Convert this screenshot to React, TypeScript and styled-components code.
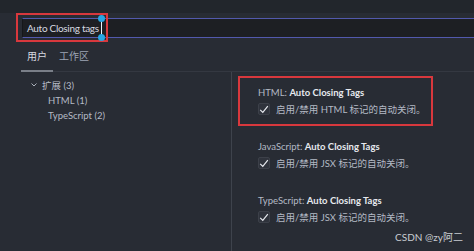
import React from "react";
import styled, { createGlobalStyle } from "styled-components";

const Global = createGlobalStyle`
  html, body { margin: 0; padding: 0; background: #282c34; }
  * { box-sizing: border-box; }
`;

const FONT = `Lato, "Noto Sans CJK SC", sans-serif`;

const Page = styled.div`
  position: relative;
  width: 474px;
  height: 251px;
  overflow: hidden;
  background: #282c34;
  font-family: ${FONT};
  color: #abb2bf;
  display: flex;
  flex-direction: column;
`;

const TopStrip = styled.div`
  height: 13px;
  background: #22262c;
  flex: none;
`;

const SearchRow = styled.div`
  position: relative;
  padding: 5px 0 0 22px;
  flex: none;
`;

const SearchBox = styled.div`
  height: 20px;
  background: #1d1f23;
  border-top: 1.5px solid #5259ad;
  border-bottom: 1.5px solid #5259ad;
  border-left: 1px solid #15171a;
  display: flex;
  align-items: center;
  padding-left: 4px;
  font-size: 10px;
  letter-spacing: -0.3px;
  color: #d7dae0;
`;

const RedFrame = styled.div<{ $l: number; $t: number; $w: number; $h: number }>`
  position: absolute;
  left: ${(p) => p.$l}px;
  top: ${(p) => p.$t}px;
  width: ${(p) => p.$w}px;
  height: ${(p) => p.$h}px;
  border: 2px solid #d8383d;
  pointer-events: none;
`;

const Caret = styled.div`
  position: absolute;
  left: 99px;
  top: 3px;
  width: 4px;
  height: 23px;
  pointer-events: none;
  &::before {
    content: "";
    position: absolute;
    left: 1.5px;
    top: 3px;
    bottom: 3px;
    width: 1px;
    background: #e8f6ff;
  }
`;

const Handle = styled.span<{ $bottom?: boolean }>`
  position: absolute;
  left: -1.5px;
  width: 7px;
  height: 7px;
  border-radius: 50%;
  background: #27a6e3;
  ${(p) => (p.$bottom ? "bottom: -2px;" : "top: -1px;")}
`;

const Tabs = styled.div`
  margin: 8px 0 0 21px;
  display: flex;
  border-bottom: 1px solid #343841;
  flex: none;
`;

const Tab = styled.div<{ $active?: boolean }>`
  font-size: 10px;
  padding: 2px 6px 7px;
  color: ${(p) => (p.$active ? "#d7dae0" : "#9da5b4")};
  border-bottom: 2px solid ${(p) => (p.$active ? "#7a7f88" : "transparent")};
  margin-bottom: -1px;
`;

const Body = styled.div`
  flex: 1;
  display: grid;
  grid-template-columns: 231px 1px 1fr;
`;

const Tree = styled.div`
  padding: 5px 0 0 31px;
  display: flex;
  flex-direction: column;
  font-size: 9.5px;
  color: #b4bac5;
`;

const TreeRow = styled.div<{ $indent?: number }>`
  height: 15.5px;
  display: flex;
  align-items: center;
  gap: 5px;
  padding-left: ${(p) => p.$indent ?? 0}px;
`;

const Divider = styled.div`
  background: #3e434c;
`;

const Settings = styled.div`
  padding: 4px 0 0 6px;
  display: flex;
  flex-direction: column;
`;

const Item = styled.div<{ $marked?: boolean }>`
  width: 195px;
  padding: 9px 0 8px 18px;
  border: 2px solid ${(p) => (p.$marked ? "#d8383d" : "transparent")};
  margin-bottom: 4px;
  display: flex;
  flex-direction: column;
  gap: 4px;
`;

const Title = styled.div`
  font-size: 9.5px;
  color: #b4bac5;
  white-space: nowrap;
  b { color: #e6e9ee; font-weight: 700; }
`;

const CheckRow = styled.div`
  display: flex;
  align-items: center;
  gap: 6px;
  font-size: 9.5px;
  color: #b4bac5;
  white-space: nowrap;
`;

const Box = styled.span`
  width: 12px;
  height: 12px;
  border-radius: 2px;
  background: #2f333c;
  border: 1px solid #3c4049;
  display: inline-flex;
  align-items: center;
  justify-content: center;
  flex: none;
`;

const Watermark = styled.div`
  position: absolute;
  right: 11px;
  bottom: 7px;
  font-size: 10px;
  color: #c9ccd2;
`;

const Chevron = () => (
  <svg width="6" height="4" viewBox="0 0 6 4">
    <path d="M0.5 0.5 L3 3 L5.5 0.5" fill="none" stroke="#aab0ba" strokeWidth="1" />
  </svg>
);

const Check = () => (
  <svg width="10" height="9" viewBox="0 0 10 9">
    <path d="M1.2 4.8 L3.8 7.4 L8.8 1.2" fill="none" stroke="#e6e9ee" strokeWidth="1.2" />
  </svg>
);

const items = [
  { prefix: "HTML", desc: "启用/禁用 HTML 标记的自动关闭。", marked: true },
  { prefix: "JavaScript", desc: "启用/禁用 JSX 标记的自动关闭。" },
  { prefix: "TypeScript", desc: "启用/禁用 JSX 标记的自动关闭。" },
];

export default function App() {
  return (
    <Page>
      <Global />
      <TopStrip />
      <SearchRow>
        <SearchBox>Auto Closing tags</SearchBox>
        <RedFrame $l={16} $t={0} $w={92} $h={29} />
        <Caret>
          <Handle />
          <Handle $bottom />
        </Caret>
      </SearchRow>
      <Tabs>
        <Tab $active>用户</Tab>
        <Tab>工作区</Tab>
      </Tabs>
      <Body>
        <Tree>
          <TreeRow>
            <Chevron />
            <span>扩展 (3)</span>
          </TreeRow>
          <TreeRow $indent={17}>HTML (1)</TreeRow>
          <TreeRow $indent={17}>TypeScript (2)</TreeRow>
        </Tree>
        <Divider />
        <Settings>
          {items.map((it) => (
            <Item key={it.prefix} $marked={it.marked}>
              <Title>
                {it.prefix}: <b>Auto Closing Tags</b>
              </Title>
              <CheckRow>
                <Box>
                  <Check />
                </Box>
                {it.desc}
              </CheckRow>
            </Item>
          ))}
        </Settings>
      </Body>
      <Watermark>CSDN @zy阿二</Watermark>
    </Page>
  );
}
